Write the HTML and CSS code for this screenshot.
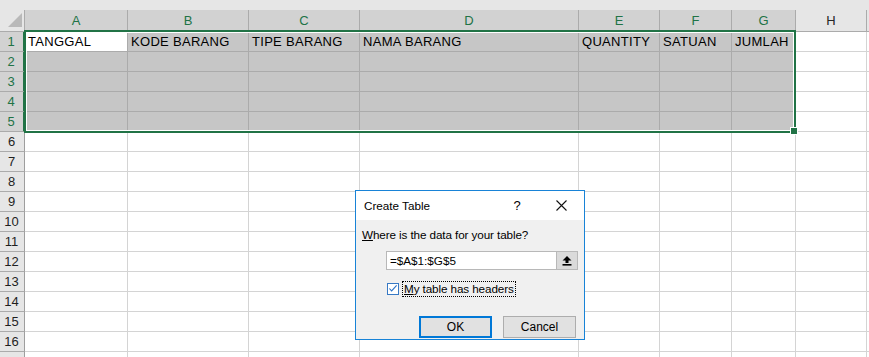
FILE: index.html
```html
<!DOCTYPE html>
<html>
<head>
<meta charset="utf-8">
<link rel="stylesheet" href="styles.css">
</head>
<body>
<div class="sheet">
  <div class="strip"></div>
  <div class="grid">
    <div class="corner"><svg width="24" height="21" viewBox="0 0 24 21"><polygon points="22,3 22,17 8,17" fill="#b9b9b9"/></svg></div>
    <div class="ch sel">A</div><div class="ch sel">B</div><div class="ch sel">C</div><div class="ch sel">D</div><div class="ch sel">E</div><div class="ch sel">F</div><div class="ch sel">G</div><div class="ch">H</div><div class="ch"></div>

    <div class="rh sel">1</div><div class="c active">TANGGAL</div><div class="c s">KODE BARANG</div><div class="c s">TIPE BARANG</div><div class="c s">NAMA BARANG</div><div class="c s">QUANTITY</div><div class="c s">SATUAN</div><div class="c s">JUMLAH</div><div class="c"></div><div class="c"></div>
    <div class="rh sel">2</div><div class="c s"></div><div class="c s"></div><div class="c s"></div><div class="c s"></div><div class="c s"></div><div class="c s"></div><div class="c s"></div><div class="c"></div><div class="c"></div>
    <div class="rh sel">3</div><div class="c s"></div><div class="c s"></div><div class="c s"></div><div class="c s"></div><div class="c s"></div><div class="c s"></div><div class="c s"></div><div class="c"></div><div class="c"></div>
    <div class="rh sel">4</div><div class="c s"></div><div class="c s"></div><div class="c s"></div><div class="c s"></div><div class="c s"></div><div class="c s"></div><div class="c s"></div><div class="c"></div><div class="c"></div>
    <div class="rh sel">5</div><div class="c s"></div><div class="c s"></div><div class="c s"></div><div class="c s"></div><div class="c s"></div><div class="c s"></div><div class="c s"></div><div class="c"></div><div class="c"></div>
    <div class="rh">6</div><div class="c"></div><div class="c"></div><div class="c"></div><div class="c"></div><div class="c"></div><div class="c"></div><div class="c"></div><div class="c"></div><div class="c"></div>
    <div class="rh">7</div><div class="c"></div><div class="c"></div><div class="c"></div><div class="c"></div><div class="c"></div><div class="c"></div><div class="c"></div><div class="c"></div><div class="c"></div>
    <div class="rh">8</div><div class="c"></div><div class="c"></div><div class="c"></div><div class="c"></div><div class="c"></div><div class="c"></div><div class="c"></div><div class="c"></div><div class="c"></div>
    <div class="rh">9</div><div class="c"></div><div class="c"></div><div class="c"></div><div class="c"></div><div class="c"></div><div class="c"></div><div class="c"></div><div class="c"></div><div class="c"></div>
    <div class="rh">10</div><div class="c"></div><div class="c"></div><div class="c"></div><div class="c"></div><div class="c"></div><div class="c"></div><div class="c"></div><div class="c"></div><div class="c"></div>
    <div class="rh">11</div><div class="c"></div><div class="c"></div><div class="c"></div><div class="c"></div><div class="c"></div><div class="c"></div><div class="c"></div><div class="c"></div><div class="c"></div>
    <div class="rh">12</div><div class="c"></div><div class="c"></div><div class="c"></div><div class="c"></div><div class="c"></div><div class="c"></div><div class="c"></div><div class="c"></div><div class="c"></div>
    <div class="rh">13</div><div class="c"></div><div class="c"></div><div class="c"></div><div class="c"></div><div class="c"></div><div class="c"></div><div class="c"></div><div class="c"></div><div class="c"></div>
    <div class="rh">14</div><div class="c"></div><div class="c"></div><div class="c"></div><div class="c"></div><div class="c"></div><div class="c"></div><div class="c"></div><div class="c"></div><div class="c"></div>
    <div class="rh">15</div><div class="c"></div><div class="c"></div><div class="c"></div><div class="c"></div><div class="c"></div><div class="c"></div><div class="c"></div><div class="c"></div><div class="c"></div>
    <div class="rh">16</div><div class="c"></div><div class="c"></div><div class="c"></div><div class="c"></div><div class="c"></div><div class="c"></div><div class="c"></div><div class="c"></div><div class="c"></div>
    <div class="rh"></div><div class="c"></div><div class="c"></div><div class="c"></div><div class="c"></div><div class="c"></div><div class="c"></div><div class="c"></div><div class="c"></div><div class="c"></div>
  </div>

  <div class="selection"><span class="handle"></span></div>

  <div class="dialog">
    <div class="titlebar">
      <span class="title">Create Table</span>
      <span class="help">?</span>
      <span class="close"><svg width="11" height="11" viewBox="0 0 11 11"><path d="M0.5 0.5 L10.5 10.5 M10.5 0.5 L0.5 10.5" stroke="#111" stroke-width="1.1" fill="none"/></svg></span>
    </div>
    <div class="dbody">
      <div class="prompt"><u>W</u>here is the data for your table?</div>
      <div class="rangebox">
        <div class="rangeinput">=$A$1:$G$5</div>
        <div class="rangebtn"><svg width="10" height="10" viewBox="0 0 10 10"><polygon points="5,0 9.5,4.5 6.5,4.5 6.5,7 3.5,7 3.5,4.5 0.5,4.5" fill="#000"/><rect x="0.5" y="8" width="9" height="1.6" fill="#000"/></svg></div>
      </div>
      <div class="checkrow">
        <span class="checkbox"><svg width="11" height="11" viewBox="0 0 11 11"><path d="M1.5 5.5 L4 8.2 L9.5 2" stroke="#2b73c8" stroke-width="1.2" fill="none"/></svg></span>
        <span class="checklabel"><u>M</u>y table has headers</span>
      </div>
      <div class="buttons">
        <div class="btn ok">OK</div>
        <div class="btn">Cancel</div>
      </div>
    </div>
  </div>
</div>
</body>
</html>
```

FILE: styles.css
```css
* { box-sizing: border-box; }
html, body { margin: 0; padding: 0; background: #fff; }
body { width: 869px; height: 357px; overflow: hidden; font-family: "Liberation Sans", Arial, sans-serif; }

.sheet { position: relative; width: 869px; height: 357px; overflow: hidden; }

.strip { height: 10px; background: #e6e6e6; }

.grid {
  display: grid;
  grid-template-columns: 25px 103px 121px 111px 219px 81px 72px 64px 71px 1fr;
  grid-template-rows: 22px;
  grid-auto-rows: 20px;
}

.corner { background: #e6e6e6; border-right: 1px solid #ababab; border-bottom: 1px solid #ababab; }
.corner svg { display: block; }

.ch {
  background: #e6e6e6;
  border-right: 1px solid #ababab;
  border-bottom: 1px solid #ababab;
  display: flex; align-items: center; justify-content: center;
  font-size: 13px; color: #262626;
}
.ch.sel { background: #d2d2d2; color: #217346; border-bottom: 2px solid #217346; }

.rh {
  background: #e6e6e6;
  border-right: 1px solid #9e9e9e;
  border-bottom: 1px solid #ababab;
  display: flex; align-items: center; justify-content: center;
  font-size: 13px; color: #1f1f1f; padding-right: 1px;
}
.rh.sel { background: #d2d2d2; color: #217346; border-right: 2px solid #217346; }

.c {
  border-right: 1px solid #d4d4d4;
  border-bottom: 1px solid #d4d4d4;
  font-size: 13px; color: #000;
  display: flex; align-items: center;
  padding-left: 3px; white-space: nowrap; overflow: visible;
  letter-spacing: 0.3px;
}
.c.s { background: #c6c6c6; border-color: #ababab; }
.c.active { background: #fff; border-right-color: #ababab; border-bottom-color: #ababab; }

.selection {
  position: absolute; left: 24px; top: 30px; width: 772px; height: 103px;
  border: 2px solid #217346;
  box-shadow: inset 0 0 0 1px #fff;
  pointer-events: none;
}
.handle {
  position: absolute; right: -4px; bottom: -4px; width: 8px; height: 8px;
  background: #217346; border: 1px solid #fff;
}

.dialog {
  position: absolute; left: 355px; top: 190px; width: 230px; height: 150px;
  border: 1px solid #1883d7;
  background: #f0f0f0;
  font-family: "Liberation Sans", Arial, sans-serif;
  font-size: 11.7px; color: #000;
  display: flex; flex-direction: column;
}
.titlebar {
  height: 29px; background: #fff;
  display: flex; align-items: center;
  padding-left: 8px;
}
.title { font-size: 11.7px; flex: 1; }
.help { width: 12px; text-align: center; margin-right: 33px; font-size: 13px; }
.close { width: 11px; height: 11px; margin-right: 17px; }
.close svg { display: block; }

.dbody { flex: 1; padding: 7px 0 0 6px; display: flex; flex-direction: column; }
.prompt { height: 15px; line-height: 15px; letter-spacing: -0.1px; }
.rangebox { display: flex; margin: 9px 0 0 24px; height: 19px; width: 192px; }
.rangeinput {
  width: 170px; height: 19px; background: #fff; border: 1px solid #b8b8b8; border-right: none;
  padding-left: 3px; line-height: 17px; font-size: 11.7px;
}
.rangebtn {
  width: 22px; height: 19px; background: #dadada; border: 1px solid #b8b8b8;
  display: flex; align-items: center; justify-content: center;
}
.rangebtn svg { display: block; }

.checkrow { display: flex; align-items: center; margin: 10px 0 0 25px; height: 17px; }
.checkbox {
  width: 12px; height: 12px; border: 1px solid #3779c4; background: #fff;
  display: flex; align-items: center; justify-content: center;
}
.checkbox svg { display: block; }
.checklabel { margin-left: 3px; border: 1px dotted #000; padding: 0 1px; line-height: 14px; letter-spacing: -0.1px; }

.buttons { display: flex; margin: 19px 0 0 57px; gap: 11px; }
.btn {
  width: 73px; height: 22px; background: #e1e1e1; border: 1px solid #adadad;
  display: flex; align-items: center; justify-content: center; font-size: 12px;
}
.btn.ok { border: 2px solid #0078d7; }
```
